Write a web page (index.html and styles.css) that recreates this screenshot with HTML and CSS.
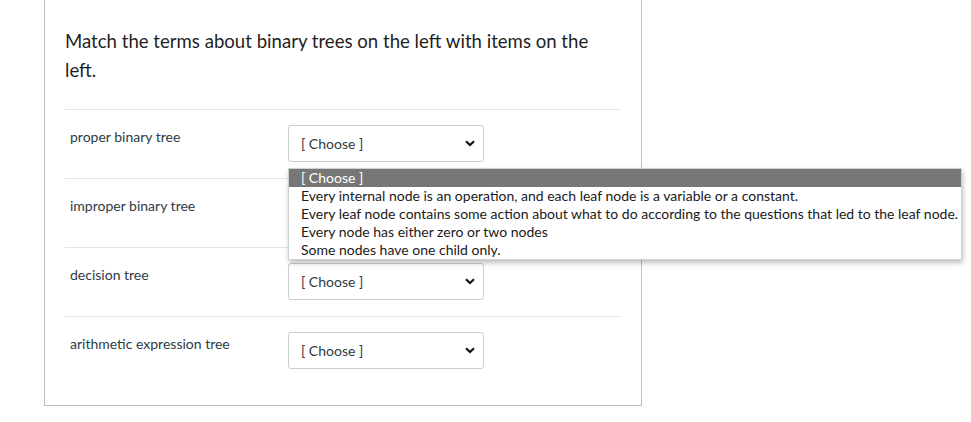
FILE: index.html
```html
<!DOCTYPE html>
<html lang="en">
<head>
    <meta charset="UTF-8">
    <meta name="viewport" content="width=device-width, initial-scale=1.0">
    <title>Matching question</title>
    <link rel="stylesheet" href="styles.css">
</head>
<body>
    <div class="question">
        <p class="question-text">Match the terms about binary trees on the left with items on the left.</p>

        <div class="answer">
            <div class="term">proper binary tree</div>
            <div class="select-wrap">
                <div class="select">
                    <span>[ Choose ]</span>
                    <svg class="chevron" width="10" height="7" viewBox="0 0 10 7"><path d="M1 1.2 L5 5 L9 1.2" fill="none" stroke="#111" stroke-width="2.2"/></svg>
                </div>
                <div class="dropdown">
                    <div class="option selected">[ Choose ]</div>
                    <div class="option">Every internal node is an operation, and each leaf node is a variable or a constant.</div>
                    <div class="option">Every leaf node contains some action about what to do according to the questions that led to the leaf node.</div>
                    <div class="option">Every node has either zero or two nodes</div>
                    <div class="option">Some nodes have one child only.</div>
                </div>
            </div>
        </div>

        <div class="answer">
            <div class="term">improper binary tree</div>
            <div class="select-wrap">
                <div class="select">
                    <span>[ Choose ]</span>
                    <svg class="chevron" width="10" height="7" viewBox="0 0 10 7"><path d="M1 1.2 L5 5 L9 1.2" fill="none" stroke="#111" stroke-width="2.2"/></svg>
                </div>
            </div>
        </div>

        <div class="answer">
            <div class="term">decision tree</div>
            <div class="select-wrap">
                <div class="select">
                    <span>[ Choose ]</span>
                    <svg class="chevron" width="10" height="7" viewBox="0 0 10 7"><path d="M1 1.2 L5 5 L9 1.2" fill="none" stroke="#111" stroke-width="2.2"/></svg>
                </div>
            </div>
        </div>

        <div class="answer">
            <div class="term">arithmetic expression tree</div>
            <div class="select-wrap">
                <div class="select">
                    <span>[ Choose ]</span>
                    <svg class="chevron" width="10" height="7" viewBox="0 0 10 7"><path d="M1 1.2 L5 5 L9 1.2" fill="none" stroke="#111" stroke-width="2.2"/></svg>
                </div>
            </div>
        </div>
    </div>
</body>
</html>
```

FILE: styles.css
```css
body {
    margin: 0;
    background: #ffffff;
    font-family: Lato, "Open Sans", Arial, sans-serif;
    color: #2d3b45;
}
.question {
    width: 556px;
    margin-left: 44px;
    padding: 0 20px 20px 20px;
    border: 1px solid #b9bfc4;
    border-top: none;
}
.question-text {
    margin: 0;
    padding-top: 27px;
    padding-bottom: 24px;
    font-size: 18.6px;
    line-height: 29px;
    color: #1f1f1f;
}
.answer {
    display: flex;
    align-items: flex-start;
    border-top: 1px solid #e2e4e6;
    padding: 15px 0 16px 5px;
}
.term {
    width: 218px;
    padding-top: 3px;
    font-size: 14px;
    line-height: 18px;
    color: #2d3b45;
}
.select-wrap {
    position: relative;
}
.select {
    box-sizing: border-box;
    width: 196px;
    height: 37px;
    display: flex;
    align-items: center;
    justify-content: space-between;
    padding: 0 8px 0 12px;
    border: 1px solid #c7cdd1;
    border-radius: 3px;
    background: #fff;
    font-size: 14px;
    color: #2d3b45;
}
.chevron {
    display: block;
}
.dropdown {
    position: absolute;
    top: 43px;
    left: 0;
    width: 674px;
    background: #fff;
    border: 1px solid #d0d0d0;
    box-sizing: border-box;
    box-shadow: 1px 3px 5px rgba(0, 0, 0, 0.25);
    z-index: 5;
}
.option {
    height: 18px;
    line-height: 17px;
    padding-left: 12px;
    font-size: 14px;
    color: #1a1a1a;
    white-space: nowrap;
}
.option.selected {
    background: #777777;
    color: #ffffff;
}
```
